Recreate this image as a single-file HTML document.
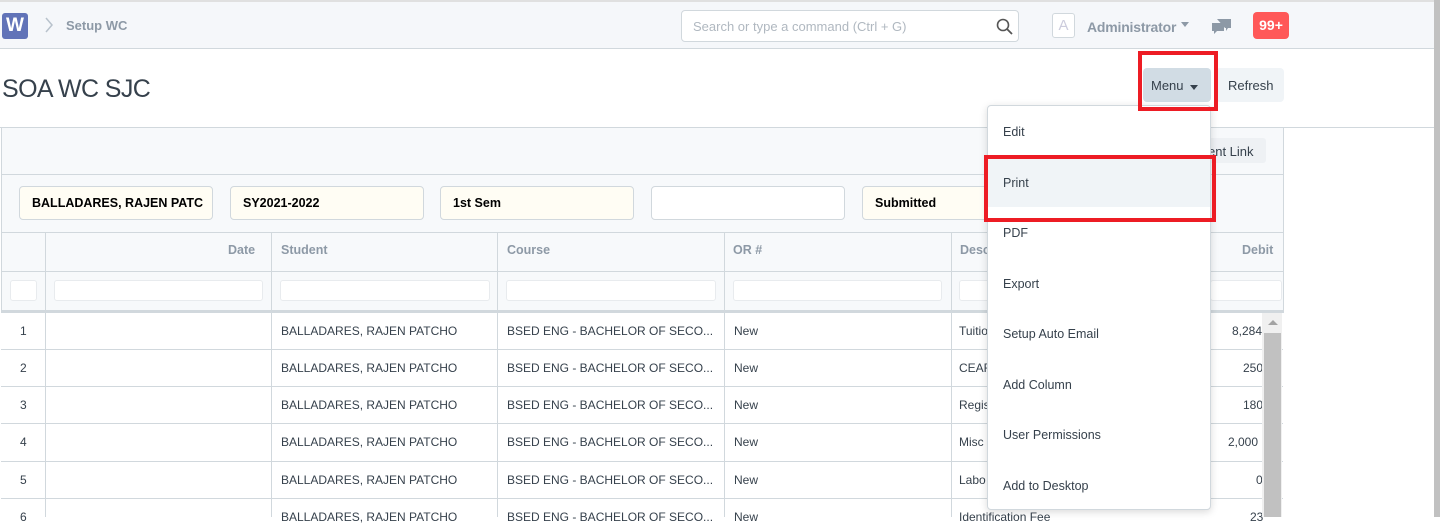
<!DOCTYPE html><html><head><style>
*{box-sizing:border-box;margin:0;padding:0}
body{width:1440px;height:517px;overflow:hidden;background:#fff;font-family:"Liberation Sans",sans-serif;position:relative;color:#36414c}
.a{position:absolute}
.nav{left:0;top:0;width:1434px;height:49px;background:#f5f7fa;border-bottom:1px solid #d1d8dd;border-top:2px solid #e0e0e0}
.inp{position:absolute;height:34px;border:1px solid #d1d8dd;border-radius:4px;background:#fffdf4;font-weight:bold;font-size:12.5px;color:#000;padding:9px 12px;white-space:nowrap;overflow:hidden}
.col{position:absolute;top:232px;height:285px;border-left:1px solid #d1d8dd}
.th{position:absolute;top:243px;font-size:12.5px;font-weight:bold;color:#8d99a6}
.fi{position:absolute;top:280px;height:21px;background:#fff;border:1px solid #e8ebee;border-radius:3px}
.row{position:absolute;left:1px;width:1282px;border-top:1px solid #d1d8dd}
.c{position:absolute;font-size:12px;color:#36414c;white-space:nowrap}
.mi{position:absolute;left:1003px;font-size:12.5px;color:#36414c}
</style></head><body>
<div class="a nav"></div>
<div class="a" style="left:2px;top:13px;width:26px;height:26px;background:#6173b8;border-radius:3px;color:#fff;font-weight:bold;font-size:19px;text-align:center;line-height:26px">W</div>
<svg class="a" style="left:44px;top:17px" width="10" height="16"><path d="M2 1l6 7-6 7" stroke="#b8c2cc" stroke-width="1.5" fill="none"/></svg>
<div class="a" style="left:66px;top:18px;font-size:13px;font-weight:bold;color:#8d99a6">Setup WC</div>
<div class="a" style="left:681px;top:10px;width:338px;height:32px;background:#fff;border:1px solid #d1d8dd;border-radius:4px;font-size:13px;color:#b0b8c0;padding:8px 11px">Search or type a command (Ctrl + G)</div>
<svg class="a" style="left:996px;top:18px" width="17" height="17"><circle cx="7" cy="7" r="5.5" stroke="#555" stroke-width="1.6" fill="none"/><path d="M11 11l5 5" stroke="#555" stroke-width="1.8"/></svg>
<div class="a" style="left:1052px;top:13px;width:23px;height:25px;border:1px solid #d1d8dd;border-radius:3px;background:#fff;color:#ccd;font-size:15px;text-align:center;line-height:23px">A</div>
<div class="a" style="left:1087px;top:19px;font-size:14px;font-weight:bold;color:#8d99a6;letter-spacing:-0.2px">Administrator</div>
<div class="a" style="left:1181px;top:22px;border:4px solid transparent;border-top:5px solid #8d99a6"></div>
<svg class="a" style="left:1211px;top:17px" width="21" height="18"><path d="M6 2h14v9h-3l-2 3v-3h-1z" fill="#8d99a6"/><path d="M1 6h12v8H6l-3 3v-3H1z" fill="#8d99a6"/></svg>
<div class="a" style="left:1253px;top:12px;width:36px;height:27px;background:#ff5858;border-radius:4px;color:#fff;font-weight:bold;font-size:14px;text-align:center;line-height:27px">99+</div>
<div class="a" style="left:1434px;top:0;width:6px;height:517px;background:#c1c1c1"></div>
<div class="a" style="left:2px;top:75px;font-size:25px;color:#36414c;letter-spacing:-0.6px">SOA WC SJC</div>
<div class="a" style="left:1143px;top:68px;width:68px;height:34px;background:#d1dce4;border-radius:4px;font-size:13px;padding:10px 8px">Menu</div>
<div class="a" style="left:1190px;top:85px;border:4px solid transparent;border-top:5px solid #36414c"></div>
<div class="a" style="left:1216px;top:68px;width:68px;height:34px;background:#f0f4f7;border-radius:4px;font-size:13px;padding:10px 12px">Refresh</div>
<div class="a" style="left:0;top:127px;width:1434px;border-top:1px solid #d1d8dd"></div>
<div class="a" style="left:1px;top:127px;width:1283px;height:390px;border:1px solid #d1d8dd;border-bottom:0;background:#f7f9fb"></div>
<div class="a" style="left:1px;top:174px;width:1283px;border-top:1px solid #d1d8dd"></div>
<div class="a" style="left:1200px;top:138px;width:66px;height:25px;background:#eef1f4;border-radius:3px;font-size:13px;padding:6px 0 0 8px">ent Link</div>
<div class="inp" style="left:19px;top:186px;width:194px">BALLADARES, RAJEN PATC</div>
<div class="inp" style="left:230px;top:186px;width:194px">SY2021-2022</div>
<div class="inp" style="left:440px;top:186px;width:194px">1st Sem</div>
<div class="inp" style="left:651px;top:186px;width:194px;background:#fff"></div>
<div class="inp" style="left:862px;top:186px;width:130px">Submitted</div>
<div class="a" style="left:1px;top:232px;width:1283px;border-top:1px solid #d1d8dd"></div>
<div class="a" style="left:1px;top:271px;width:1283px;border-top:1px solid #d1d8dd"></div>
<div class="a" style="left:1px;top:310px;width:1283px;height:207px;border-top:3px solid #d1d8dd;background:#fff"></div>
<div class="col" style="left:45px"></div><div class="col" style="left:271px"></div><div class="col" style="left:497px"></div><div class="col" style="left:724px"></div><div class="col" style="left:951px"></div>
<div class="th" style="left:228px">Date</div><div class="th" style="left:281px">Student</div><div class="th" style="left:507px">Course</div><div class="th" style="left:733px">OR #</div><div class="th" style="left:960px">Desc</div><div class="th" style="left:1242px">Debit</div>
<div class="fi" style="left:10px;width:27px"></div><div class="fi" style="left:54px;width:209px"></div><div class="fi" style="left:280px;width:210px"></div><div class="fi" style="left:506px;width:210px"></div><div class="fi" style="left:733px;width:209px"></div><div class="fi" style="left:959px;width:40px"></div><div class="fi" style="left:1210px;width:72px"></div>
<div class="row" style="top:349px"></div><div class="row" style="top:386px"></div><div class="row" style="top:423px"></div><div class="row" style="top:461px"></div><div class="row" style="top:498px"></div>
<div class="c" style="left:20px;top:324px">1</div><div class="c" style="left:20px;top:361px">2</div><div class="c" style="left:20px;top:398px">3</div><div class="c" style="left:20px;top:435px">4</div><div class="c" style="left:20px;top:473px">5</div><div class="c" style="left:20px;top:510px">6</div>
<div class="c" style="left:281px;top:324px">BALLADARES, RAJEN PATCHO</div><div class="c" style="left:281px;top:361px">BALLADARES, RAJEN PATCHO</div><div class="c" style="left:281px;top:398px">BALLADARES, RAJEN PATCHO</div><div class="c" style="left:281px;top:435px">BALLADARES, RAJEN PATCHO</div><div class="c" style="left:281px;top:473px">BALLADARES, RAJEN PATCHO</div><div class="c" style="left:281px;top:510px">BALLADARES, RAJEN PATCHO</div>
<div class="c" style="left:507px;top:324px">BSED ENG - BACHELOR OF SECO...</div><div class="c" style="left:507px;top:361px">BSED ENG - BACHELOR OF SECO...</div><div class="c" style="left:507px;top:398px">BSED ENG - BACHELOR OF SECO...</div><div class="c" style="left:507px;top:435px">BSED ENG - BACHELOR OF SECO...</div><div class="c" style="left:507px;top:473px">BSED ENG - BACHELOR OF SECO...</div><div class="c" style="left:507px;top:510px">BSED ENG - BACHELOR OF SECO...</div>
<div class="c" style="left:734px;top:324px">New</div><div class="c" style="left:734px;top:361px">New</div><div class="c" style="left:734px;top:398px">New</div><div class="c" style="left:734px;top:435px">New</div><div class="c" style="left:734px;top:473px">New</div><div class="c" style="left:734px;top:510px">New</div>
<div class="c" style="left:959px;top:324px">Tuitio</div><div class="c" style="left:959px;top:361px">CEAF</div><div class="c" style="left:959px;top:398px">Regis</div><div class="c" style="left:959px;top:435px">Misc</div><div class="c" style="left:959px;top:473px">Labo</div><div class="c" style="left:959px;top:510px">Identification Fee</div>
<div class="c" style="left:1232px;top:324px">8,284</div><div class="c" style="left:1243px;top:361px">250</div><div class="c" style="left:1243px;top:398px">180</div><div class="c" style="left:1228px;top:435px">2,000</div><div class="c" style="left:1256px;top:473px">0</div><div class="c" style="left:1250px;top:510px">23</div>
<div class="a" style="left:1262px;top:313px;width:20px;height:204px;background:#f0f0f0"></div>
<div class="a" style="left:1264px;top:333px;width:17px;height:184px;background:#c1c1c1"></div>
<div class="a" style="left:1268px;top:320px;border:5px solid transparent;border-bottom:5px solid #a3a3a3;border-top:0"></div>
<div class="a" style="left:987px;top:105px;width:224px;height:405px;background:#fff;border:1px solid #d1d8dd;border-radius:4px;box-shadow:0 2px 8px rgba(0,0,0,.15)"></div>
<div class="a" style="left:988px;top:159px;width:222px;height:48px;background:#f0f4f7"></div>
<div class="mi" style="top:125px">Edit</div><div class="mi" style="top:176px">Print</div><div class="mi" style="top:226px">PDF</div><div class="mi" style="top:277px">Export</div><div class="mi" style="top:327px">Setup Auto Email</div><div class="mi" style="top:378px">Add Column</div><div class="mi" style="top:428px">User Permissions</div><div class="mi" style="top:479px">Add to Desktop</div>
<div class="a" style="left:1138px;top:51px;width:80px;height:60px;border:4px solid #ed1c24"></div>
<div class="a" style="left:984px;top:155px;width:232px;height:67px;border:4px solid #ed1c24"></div>
</body></html>
